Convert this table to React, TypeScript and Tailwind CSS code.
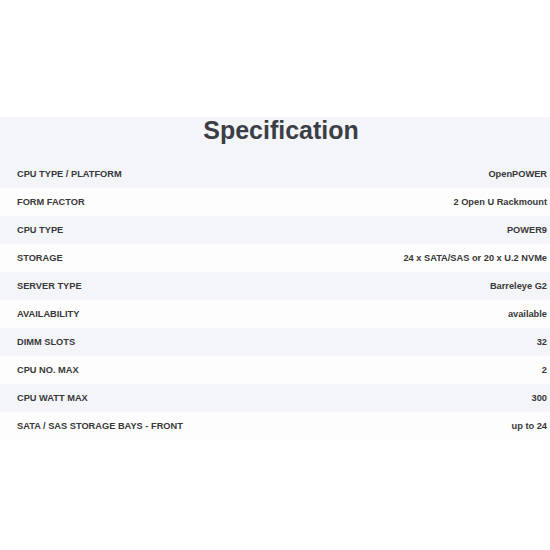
const specs: [string, string][] = [
  ["CPU TYPE / PLATFORM", "OpenPOWER"],
  ["FORM FACTOR", "2 Open U Rackmount"],
  ["CPU TYPE", "POWER9"],
  ["STORAGE", "24 x SATA/SAS or 20 x U.2 NVMe"],
  ["SERVER TYPE", "Barreleye G2"],
  ["AVAILABILITY", "available"],
  ["DIMM SLOTS", "32"],
  ["CPU NO. MAX", "2"],
  ["CPU WATT MAX", "300"],
  ["SATA / SAS STORAGE BAYS - FRONT", "up to 24"],
];

export default function App() {
  return (
    <div
      className="w-[550px] h-[550px] bg-white pt-[117px]"
      style={{ fontFamily: '"Liberation Sans", Arial, sans-serif' }}
    >
      <div className="bg-[#f4f5f8]">
        <h2 className="text-center text-[25px] leading-[27px] font-bold text-[#3c3e46] pb-[16px] pl-[12px]">
          Specification
        </h2>
        <div>
          {specs.map(([label, value], i) => (
            <div
              key={label}
              className={`flex items-center justify-between h-[28px] pl-[17px] pr-[3px] pt-[1px] text-[9.25px] font-bold text-[#383838] ${
                i % 2 === 0 ? "bg-[#f4f5f8]" : "bg-[#fdfdfd]"
              }`}
            >
              <span>{label}</span>
              <span>{value}</span>
            </div>
          ))}
        </div>
      </div>
    </div>
  );
}
